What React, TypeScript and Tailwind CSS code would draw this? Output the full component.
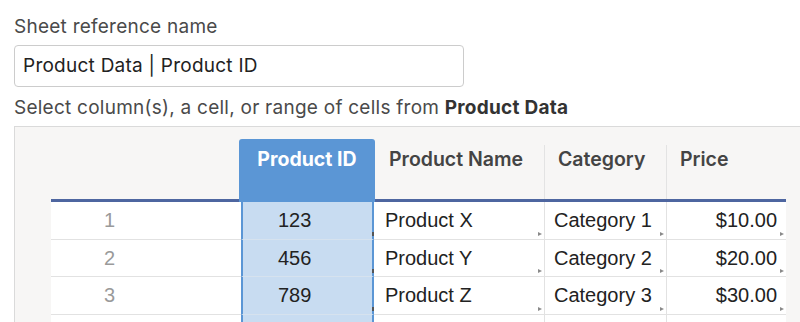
import React from 'react'

const rows = [
  { n: 1, id: '123', name: 'Product X', cat: 'Category 1', price: '$10.00' },
  { n: 2, id: '456', name: 'Product Y', cat: 'Category 2', price: '$20.00' },
  { n: 3, id: '789', name: 'Product Z', cat: 'Category 3', price: '$30.00' },
  { n: 0, id: '', name: '', cat: '', price: '' }
]

function Marker() {
  return (
    <span className="absolute right-[2px] bottom-[3px] h-0 w-0 border-y-[2.5px] border-l-[4px] border-y-transparent border-l-[#8a8a8a]" />
  )
}

export default function App() {
  return (
    <div className="h-[322px] w-[800px] overflow-hidden bg-white font-['Inter',sans-serif]">
      <div className="pl-[14px] pt-[15px]">
        <div className="text-[19px] leading-[24px] tracking-[0.25px] text-[#4a4a4a]">Sheet reference name</div>
        <div className="mt-[6px] flex h-[42px] w-[450px] items-center rounded-[4px] border border-[#cccccc] px-[8px] text-[19px] tracking-[0.25px] text-[#222]">
          Product Data | Product ID
        </div>
        <div className="mt-[9px] text-[19px] leading-[24px] tracking-[0.25px] text-[#4a4a4a]">
          Select column(s), a cell, or range of cells from{' '}
          <span className="font-bold text-[#333]">Product Data</span>
        </div>

        <div className="mt-[6px] h-[200px] border-t border-l border-[#dadada] bg-[#f7f6f5] pt-[12px] pl-[36px]">
          {/* header */}
          <div className="flex h-[63px] w-[735px] text-[19.5px] leading-[24px]">
            <div className="w-[189px] border-b-[3px] border-[#4e66a0]" />
            <div className="relative z-10 -mx-px w-[136px] rounded-t-[3px] bg-[#5b96d5] pt-[8px] text-center font-bold text-white">
              Product ID
            </div>
            <div className="w-[170px] border-b-[3px] border-[#4e66a0] pt-[8px] pl-[15px] font-semibold text-[#444]">
              Product Name
            </div>
            <div className="flex w-[122px] flex-col border-b-[3px] border-[#4e66a0]">
              <div className="mt-[6px] flex-1 border-l border-[#e3e3e3] pt-[2px] pl-[13px] font-semibold text-[#444]">
                Category
              </div>
            </div>
            <div className="flex w-[120px] flex-col border-b-[3px] border-[#4e66a0]">
              <div className="mt-[6px] flex-1 border-l border-[#e3e3e3] pt-[2px] pl-[13px] font-semibold text-[#444]">
                Price
              </div>
            </div>
          </div>

          {/* body */}
          {rows.map((r, i) => (
            <div
              key={i}
              className="flex h-[37.5px] w-[735px] font-['Liberation_Sans',Arial,sans-serif] text-[20px] text-[#222]"
            >
              <div className="flex w-[190px] items-center border-b border-[#e2e2e2] bg-white pl-[53px] text-[#9a9a9a]">
                {r.n ? r.n : ''}
              </div>
              <div className="relative flex w-[133px] items-center border-x-[2.5px] border-b border-x-[#5b96d5] border-b-[#d6e2ee] bg-[#c8dcf1] pl-[35px]">
                {r.id}
                <span className="absolute -right-[2px] bottom-[3px] h-[4px] w-[2px] bg-[#555]" />
              </div>
              <div className="relative flex w-[170px] items-center border-b border-[#e2e2e2] bg-white pl-[11px]">
                {r.name}
                <Marker />
              </div>
              <div className="relative flex w-[122px] items-center border-b border-l border-[#e2e2e2] bg-white pl-[9px]">
                {r.cat}
                <Marker />
              </div>
              <div className="relative flex w-[120px] items-center justify-end border-b border-l border-[#e2e2e2] bg-white pr-[9px]">
                {r.price}
                <Marker />
              </div>
            </div>
          ))}
        </div>
      </div>
    </div>
  )
}
